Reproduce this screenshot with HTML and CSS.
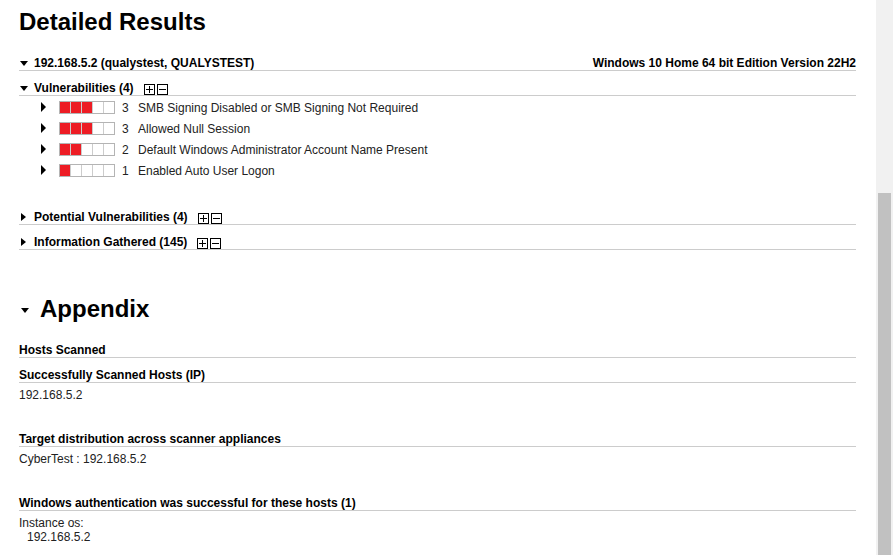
FILE: index.html
```html
<!DOCTYPE html>
<html>
<head>
    <title>Scan Results - Detailed Results</title>
    <link rel="stylesheet" href="styles.css">
</head>
<body>
    <div class="screen">
        <div class="page">
            <h1 class="title">Detailed Results</h1>

            <div class="row">
                <span class="tri-down"></span>
                <span class="label">192.168.5.2 (qualystest, QUALYSTEST)</span>
                <span class="os">Windows 10 Home 64 bit Edition Version 22H2</span>
            </div>

            <div class="row">
                <span class="tri-down"></span>
                <span class="label">Vulnerabilities (4)</span>
                <span class="toggles">
                    <svg class="tog" width="11" height="11" viewBox="0 0 11 11"><rect x="0.5" y="0.5" width="10" height="10" fill="#fff" stroke="#000"/><path d="M2 5.5H9M5.5 2V9" stroke="#000"/></svg>
                    <svg class="tog" width="11" height="11" viewBox="0 0 11 11"><rect x="0.5" y="0.5" width="10" height="10" fill="#fff" stroke="#000"/><path d="M2 5.5H9" stroke="#000"/></svg>
                </span>
            </div>

            <div class="items">
                <div class="item">
                    <span class="tri-right"></span>
                    <span class="sev"><i class="on"></i><i class="on"></i><i class="on"></i><i></i><i></i></span>
                    <span class="num">3</span>
                    <span class="name">SMB Signing Disabled or SMB Signing Not Required</span>
                </div>
                <div class="item">
                    <span class="tri-right"></span>
                    <span class="sev"><i class="on"></i><i class="on"></i><i class="on"></i><i></i><i></i></span>
                    <span class="num">3</span>
                    <span class="name">Allowed Null Session</span>
                </div>
                <div class="item">
                    <span class="tri-right"></span>
                    <span class="sev"><i class="on"></i><i class="on"></i><i></i><i></i><i></i></span>
                    <span class="num">2</span>
                    <span class="name">Default Windows Administrator Account Name Present</span>
                </div>
                <div class="item">
                    <span class="tri-right"></span>
                    <span class="sev"><i class="on"></i><i></i><i></i><i></i><i></i></span>
                    <span class="num">1</span>
                    <span class="name">Enabled Auto User Logon</span>
                </div>
            </div>

            <div class="row">
                <span class="tri-right small"></span>
                <span class="label">Potential Vulnerabilities (4)</span>
                <span class="toggles">
                    <svg class="tog" width="11" height="11" viewBox="0 0 11 11"><rect x="0.5" y="0.5" width="10" height="10" fill="#fff" stroke="#000"/><path d="M2 5.5H9M5.5 2V9" stroke="#000"/></svg>
                    <svg class="tog" width="11" height="11" viewBox="0 0 11 11"><rect x="0.5" y="0.5" width="10" height="10" fill="#fff" stroke="#000"/><path d="M2 5.5H9" stroke="#000"/></svg>
                </span>
            </div>

            <div class="row">
                <span class="tri-right small"></span>
                <span class="label">Information Gathered (145)</span>
                <span class="toggles">
                    <svg class="tog" width="11" height="11" viewBox="0 0 11 11"><rect x="0.5" y="0.5" width="10" height="10" fill="#fff" stroke="#000"/><path d="M2 5.5H9M5.5 2V9" stroke="#000"/></svg>
                    <svg class="tog" width="11" height="11" viewBox="0 0 11 11"><rect x="0.5" y="0.5" width="10" height="10" fill="#fff" stroke="#000"/><path d="M2 5.5H9" stroke="#000"/></svg>
                </span>
            </div>

            <h1 class="title appendix"><span class="tri-down"></span>Appendix</h1>

            <div class="sub first">Hosts Scanned</div>
            <div class="sub">Successfully Scanned Hosts (IP)</div>
            <div class="val">192.168.5.2</div>

            <div class="sub gap">Target distribution across scanner appliances</div>
            <div class="val">CyberTest : 192.168.5.2</div>

            <div class="sub gap">Windows authentication was successful for these hosts (1)</div>
            <div class="val">Instance os:</div>
            <div class="val indent">192.168.5.2</div>
        </div>
        <div class="scrollbar"><div class="thumb"></div></div>
    </div>
</body>
</html>
```

FILE: styles.css
```css
html, body { margin: 0; padding: 0; background: #fff; }
body { font-family: "Liberation Sans", Arial, sans-serif; font-size: 12px; color: #222; }
.screen { display: flex; height: 555px; overflow: hidden; }
.page { flex: 1; padding: 8px 20px 0 19px; overflow: hidden; }

.title { margin: 0; font-size: 24px; line-height: 28px; font-weight: bold; color: #000; }
.title.appendix { display: flex; align-items: center; margin-top: 45px; }
.title.appendix .tri-down { margin: 3px 11px 0 2px; }

.row { display: flex; align-items: center; margin-top: 10px; line-height: 14px; font-weight: bold; color: #000; border-bottom: 1px solid #ccc; }
.title + .row { margin-top: 20px; }
.row .tri-down { margin: 1px 6px 0 1px; border-left-width: 4.5px; border-right-width: 4.5px; }
.row .tri-right.small { margin: 0 8px 0 2px; }
.os { margin-left: auto; }
.toggles { display: flex; gap: 2px; margin-left: 10px; align-self: flex-end; }
.tog { display: block; shape-rendering: crispEdges; }

.tri-down { display: inline-block; width: 0; height: 0; border-left: 4px solid transparent; border-right: 4px solid transparent; border-top: 5px solid #000; }
.tri-right { display: inline-block; width: 0; height: 0; border-top: 4.5px solid transparent; border-bottom: 4.5px solid transparent; border-left: 5px solid #000; }

.items { padding: 1px 0 19px 22px; }
.item { display: flex; align-items: center; height: 21px; line-height: 14px; }
.item .tri-right { margin: -1px 13px 0 0; border-top-width: 5px; border-bottom-width: 5px; }
.sev { display: flex; border: 1px solid #b4b4b4; height: 11px; }
.sev i { width: 10px; border-right: 1px solid #ccc; background: #fff; }
.sev i:last-child { border-right: none; }
.sev i.on { background: #ed1c24; }
.num { width: 16px; margin-left: 7px; }

.sub { margin-top: 10px; line-height: 14px; font-weight: bold; color: #000; border-bottom: 1px solid #ccc; }
.sub.first { margin-top: 20px; }
.sub.gap { margin-top: 30px; }
.val { line-height: 14px; }
.sub + .val { margin-top: 5px; }
.indent { padding-left: 8px; }

.scrollbar { width: 17px; background: #f1f1f1; display: flex; flex-direction: column; }
.thumb { flex: 1; margin: 193px 2px 0 2px; background: #c1c1c1; }
```
